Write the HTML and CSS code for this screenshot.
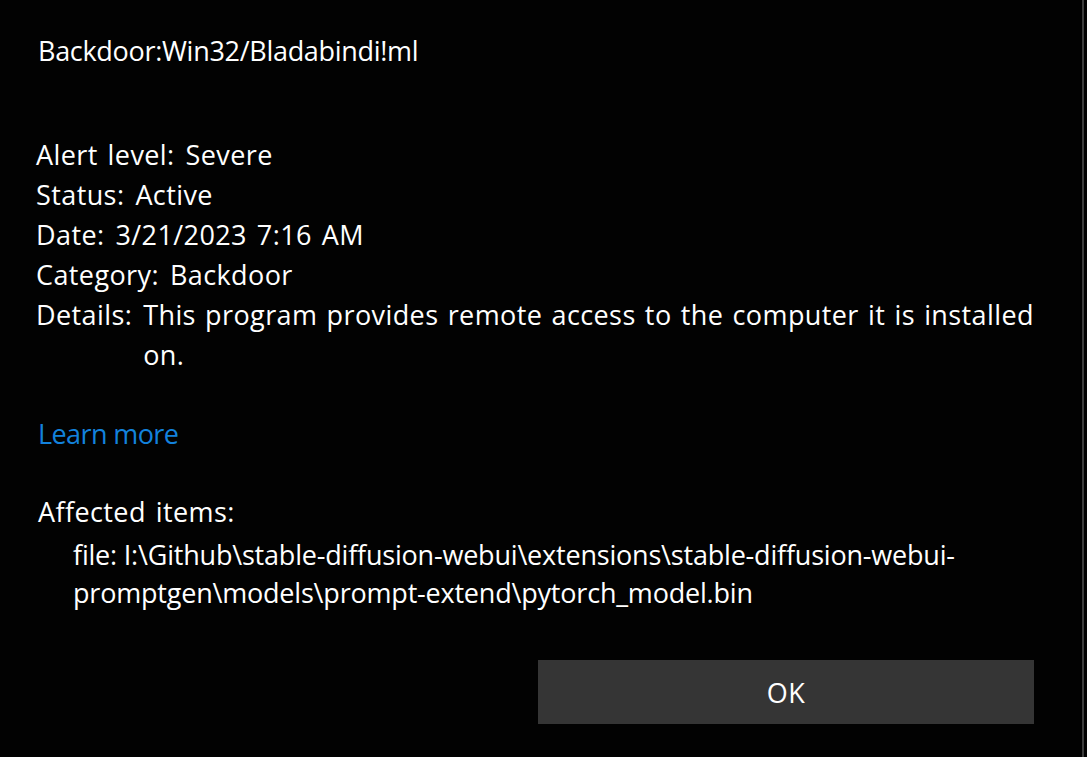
FILE: index.html
```html
<!DOCTYPE html>
<html>
<head>
<meta charset="utf-8">
<link rel="stylesheet" href="styles.css">
</head>
<body>
<div class="window">
  <div class="title">Backdoor:Win32/Bladabindi!ml</div>
  <div class="info">
    <div class="row"><span class="label">Alert level:</span><span class="value">Severe</span></div>
    <div class="row"><span class="label">Status:</span><span class="value">Active</span></div>
    <div class="row"><span class="label">Date:</span><span class="value">3/21/2023 7:16 AM</span></div>
    <div class="row"><span class="label">Category:</span><span class="value">Backdoor</span></div>
    <div class="row row-details"><span class="label">Details:</span><span class="value">This program provides remote access to the computer it is installed on.</span></div>
  </div>
  <a class="link" href="#">Learn more</a>
  <div class="affected">Affected items:</div>
  <div class="item">file: I:\Github\stable-diffusion-webui\extensions\stable-diffusion-webui-promptgen\models\prompt-extend\pytorch_model.bin</div>
  <div class="actions"><button class="ok">OK</button></div>
</div>
</body>
</html>
```
FILE: styles.css
```css
html, body {
  margin: 0;
  padding: 0;
  background: #020202;
}
body {
  width: 1087px;
  height: 757px;
  overflow: hidden;
  font-family: "Open Sans", "Noto Sans", sans-serif;
  color: #ffffff;
  font-size: 27px;
  line-height: 40px;
  letter-spacing: 0.4px;
  word-spacing: 2.5px;
}
.window {
  box-sizing: border-box;
  width: 1084px;
  height: 757px;
  border-right: 2px solid #3d3d3d;
  padding: 31px 30px 0 36px;
  display: flex;
  flex-direction: column;
}
.title {
  margin-left: 2px;
  letter-spacing: -0.3px;
}
.info {
  margin-top: 64px;
  display: flex;
  flex-direction: column;
}
.row {
  display: flex;
  gap: 11px;
}
.label {
  flex: none;
}
.value {
  flex: 1;
}
.row-details .value {
  word-spacing: 1.8px;
}
.link {
  margin-top: 39px;
  color: #1382dd;
  text-decoration: none;
  align-self: flex-start;
  margin-left: 2px;
  letter-spacing: -0.6px;
  word-spacing: 0;
}
.affected {
  margin-top: 38px;
  margin-left: 2px;
}
.item {
  margin-top: 4px;
  margin-left: 37px;
  line-height: 38px;
  letter-spacing: -0.2px;
  word-spacing: 0;
}
.actions {
  margin-top: 48px;
  display: flex;
  justify-content: flex-end;
  padding-right: 18px;
}
.ok {
  width: 496px;
  height: 64px;
  background: #353535;
  border: none;
  color: #ffffff;
  font-family: inherit;
  font-size: 27px;
  letter-spacing: 0.4px;
  padding: 0;
}
```
